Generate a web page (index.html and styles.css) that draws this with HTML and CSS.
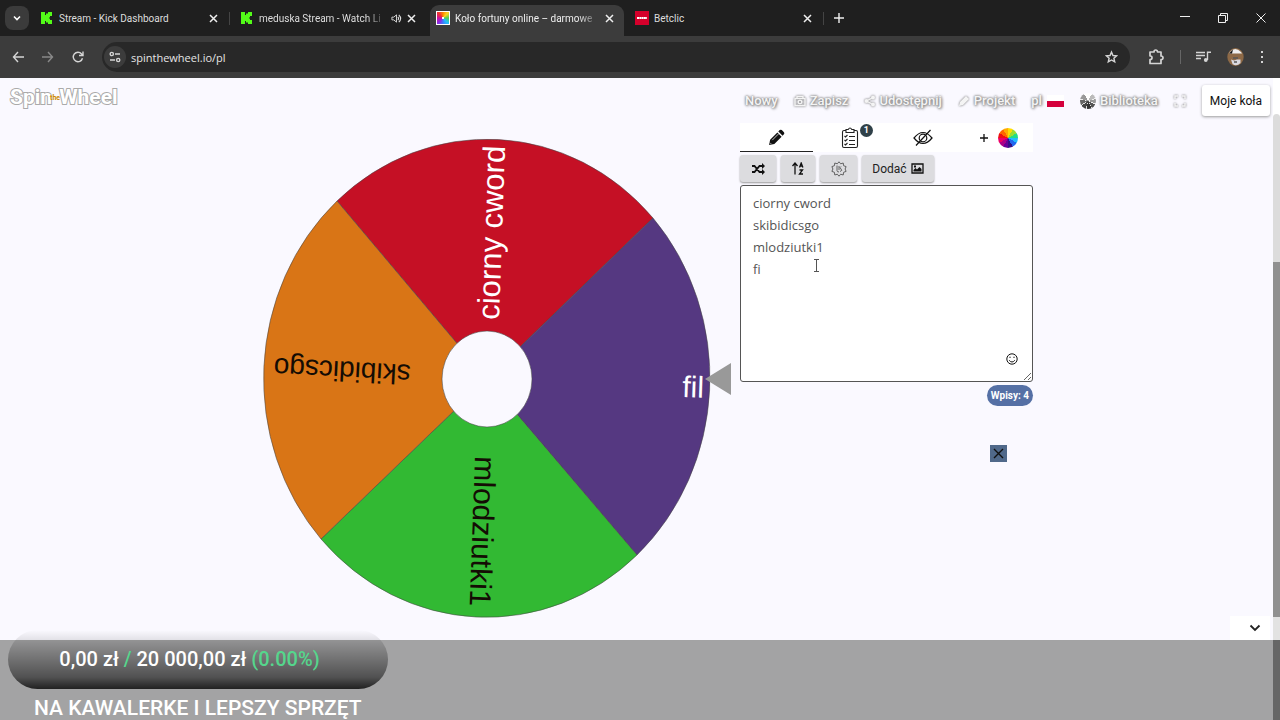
FILE: index.html
```html
<!DOCTYPE html>
<html lang="pl">
<head>
  <meta charset="UTF-8">
  <meta name="viewport" content="width=device-width, initial-scale=1.0">
  <title>Koło fortuny online – darmowe</title>
  <link rel="stylesheet" href="styles.css">
</head>
<body>
  <!-- browser tabs -->
  <div class="tabs">
    <button class="tab-search" aria-label="Szukaj kart"><svg width="8" height="8" viewBox="0 0 8 8"><path d="M1 2.500l3 3 3-3" fill="none" stroke="#fff" stroke-width="1.6"/></svg></button>
    <div class="tab">
      <svg class="favicon" viewBox="0 0 14 14"><path d="M1 1h4v3h1V2.500h2V1h4v4h-2v1.500H9v1h1V9h2v4H8v-1.500H6V10H5v3H1z" fill="#53fc18"/></svg>
      <span class="tab-title">Stream - Kick Dashboard</span>
      <button class="x" aria-label="Zamknij"><svg width="9" height="9" viewBox="0 0 9 9"><path d="M1 1l7 7M8 1l-7 7"/></svg></button>
    </div>
    <div class="tab tab-wide sep">
      <svg class="favicon" viewBox="0 0 14 14"><path d="M1 1h4v3h1V2.500h2V1h4v4h-2v1.500H9v1h1V9h2v4H8v-1.500H6V10H5v3H1z" fill="#53fc18"/></svg>
      <span class="tab-title fade">meduska Stream - Watch Li</span>
      <svg width="11" height="11" viewBox="0 0 12 12"><path d="M1 4.500v3h2l3 2.500V2L3 4.500z" fill="none" stroke="#ddd"/><path d="M7.500 4.200q1.500 1.800 0 3.600M8.500 2q4 4 0 8" fill="none" stroke="#ddd" stroke-width="1.200"/></svg>
      <button class="x" aria-label="Zamknij"><svg width="9" height="9" viewBox="0 0 9 9"><path d="M1 1l7 7M8 1l-7 7"/></svg></button>
    </div>
    <div class="tab active">
      <span class="favicon wheel-fav"></span>
      <span class="tab-title fade">Koło fortuny online – darmowe</span>
      <button class="x" aria-label="Zamknij"><svg width="9" height="9" viewBox="0 0 9 9"><path d="M1 1l7 7M8 1l-7 7"/></svg></button>
    </div>
    <div class="tab tab-last">
      <svg class="favicon" viewBox="0 0 14 14"><path d="M0 0h14v14H0z" fill="#d5002b"/><path d="M2 7h10" stroke="#fff" stroke-width="2" stroke-dasharray="2 .3"/></svg>
      <span class="tab-title">Betclic</span>
      <button class="x" aria-label="Zamknij"><svg width="9" height="9" viewBox="0 0 9 9"><path d="M1 1l7 7M8 1l-7 7"/></svg></button>
    </div>
    <button class="new-tab sep" aria-label="Nowa karta"><svg width="10" height="10" viewBox="0 0 10 10"><path d="M5 0v10M0 5h10" stroke-width="1.400"/></svg></button>
    <div class="win">
      <button aria-label="Minimalizuj"><svg width="10" height="10" viewBox="0 0 10 10"><path d="M0 3.500h10"/></svg></button>
      <button aria-label="Przywróć"><svg width="10" height="10" viewBox="0 0 10 10"><path d="M.5 2.500h7v7h-7zM2.500 2.500v-2h7v7h-2"/></svg></button>
      <button aria-label="Zamknij okno"><svg width="10" height="10" viewBox="0 0 10 10"><path d="M.5 .5l9 9M9.500 .5l-9 9"/></svg></button>
    </div>
  </div>

  <!-- address bar -->
  <div class="toolbar">
    <button aria-label="Wstecz"><svg width="12" height="12" viewBox="0 0 12 12"><path d="M6 1L1.500 6 6 11M1.500 6H12"/></svg></button>
    <button class="off" aria-label="Dalej"><svg width="12" height="12" viewBox="0 0 12 12"><path d="M6 1l4.500 5L6 11M10.500 6H0"/></svg></button>
    <button aria-label="Odśwież"><svg width="12" height="12" viewBox="0 0 12 12"><path d="M10.500 7.200A4.700 4.700 0 1 1 9.600 3L11 4.500M11 .5v4H7"/></svg></button>
    <div class="address">
      <span class="site-info"><svg width="12" height="12" viewBox="0 0 12 12"><circle cx="2.800" cy="3" r="1.600"/><path d="M6 3h5M1 9h5"/><circle cx="9.200" cy="9" r="1.600"/></svg></span>
      <input type="text" value="spinthewheel.io/pl" aria-label="Adres">
      <button aria-label="Zakładka"><svg width="13" height="14" viewBox="0 0 24 24"><path d="M12 3l2.700 6.200 6.800.6-5.100 4.500 1.500 6.700-5.900-3.500L6.100 21l1.500-6.700L2.500 9.800l6.800-.6z" stroke-width="2.600"/></svg></button>
    </div>
    <div class="tools">
      <button aria-label="Rozszerzenia"><svg width="16" height="16" viewBox="0 0 16 16"><path d="M2 3h4q0-2 1.700-2T9.500 3H13v4q2 0 2 1.800T13 10.500v4H2v-4q2 0 2-1.800T2 7z" stroke-linejoin="round" stroke-width="1.700"/></svg></button>
      <button class="bar-left" aria-label="Multimedia"><svg width="15" height="12" viewBox="0 0 15 12"><path d="M0 1.500h9M0 4.500h9M0 7.500h5M11.500 9V1.200H15"/><circle cx="9.800" cy="9" r="1.900" class="dot"/></svg></button>
      <button aria-label="Profil"><svg width="17" height="18" viewBox="0 0 17 18"><ellipse cx="8.500" cy="9" rx="8.200" ry="9" fill="#8d6946" stroke="none"/><path d="M3 4q5-6 11 0l1 1.500H2z" fill="#eee" stroke="none"/><path d="M2 5.500l4-4-1 4z" fill="#111" stroke="none"/><path d="M4 11.500l3 1 3-1 3.500 0v3.500q-4 4-8 1z" fill="#d8d8e0" stroke="none"/><path d="M6 10h5M7 14h3" stroke="#555"/></svg></button>
      <button aria-label="Menu"><svg width="4" height="14" viewBox="0 0 4 14"><path class="dot" d="M1 1h2v2H1zM1 6h2v2H1zM1 11h2v2H1z"/></svg></button>
    </div>
  </div>

  <div class="view">
    <div class="page">
      <div class="left">
        <a class="logo" href="#">Spin<small>the</small>Wheel</a>
        <svg class="wheel" viewBox="0 0 470 482">
          <g stroke="#444" stroke-opacity=".7" stroke-width=".8">
            <path d="M225 241L75 63A224 240 0 0 1 391 80Z" fill="#c51025"/>
            <path d="M225 241L391 80A224 240 0 0 1 375 417Z" fill="#553881"/>
            <path d="M225 241L375 417A224 240 0 0 1 59 401Z" fill="#32b933"/>
            <path d="M225 241L59 401A224 240 0 0 1 75 63Z" fill="#d97516"/>
            <ellipse cx="225" cy="241" rx="45" ry="48" fill="#faf9ff"/>
          </g>
          <text class="light" font-size="31" transform="translate(237 182) rotate(-88)">ciorny cword</text>
          <text class="light" font-size="30" transform="translate(420 259) rotate(2)">fil</text>
          <text font-size="30" transform="translate(213 318) rotate(92)">mlodziutki1</text>
          <text font-size="28" transform="translate(149 227) rotate(183)">skibidicsgo</text>
          <path d="M443 241l26-16v32z" fill="#999"/>
        </svg>
      </div>

      <div class="right">
        <nav class="menu">
          <a href="#">Nowy</a>
          <a href="#"><svg width="12" height="12" viewBox="0 0 12 12"><path d="M1 3.500h10v7H1zM3 3.500v-2h6v2"/><circle cx="6" cy="7" r="1.800"/></svg>Zapisz</a>
          <a href="#"><svg width="11" height="12" viewBox="0 0 11 12"><path d="M9 2.500L2.500 6 9 9.500"/><circle class="fill" cx="9" cy="2.500" r="2"/><circle class="fill" cx="2.500" cy="6" r="2"/><circle class="fill" cx="9" cy="9.500" r="2"/></svg>Udostępnij</a>
          <a href="#"><svg width="12" height="12" viewBox="0 0 12 12"><path class="fill" d="M1 11l1-4 6-6 3 3-6 6z"/></svg>Projekt</a>
          <a href="#">pl<span class="flag"></span></a>
          <a href="#"><span class="mini-wheel"></span>Biblioteka</a>
          <a href="#" aria-label="Pełny ekran"><svg width="12" height="12" viewBox="0 0 12 12"><path d="M1 4V1h3M8 1h3v3M11 8v3H8M4 11H1V8"/></svg></a>
          <button class="mine">Moje koła</button>
        </nav>

        <div class="panel">
          <div class="modes">
            <button class="on" aria-label="Edycja"><svg width="17" height="17" viewBox="0 0 16 16"><path fill="#111" d="M1 15l1-5 6.800-6.800 4 4L6 14zM9.700 2.300L11 1q1-.8 2 0l2 2q.8 1 0 2l-1.300 1.300z"/><path d="M4 10.500l6-6M2 13l1 1" stroke="#fff" stroke-width=".7"/></svg></button>
            <button aria-label="Wyniki"><svg width="18" height="22" viewBox="0 0 18 22" fill="none" stroke="#222" stroke-width="1.100"><path d="M5 3.500H3q-1.500 0-1.500 1.500v14q0 1.500 1.500 1.500h12q1.500 0 1.500-1.500V5q0-1.500-1.500-1.500h-2M5 5.500v-3h2.200q1.800-3 3.600 0H13v3zM8 9.500h6M8 13.500h6M8 17.500h6M3.500 9l1 1 2-2M3.500 13l1 1 2-2M3.500 17l1 1 2-2"/></svg><span class="count">1</span></button>
            <button aria-label="Ukryj"><svg width="20" height="18" viewBox="0 0 20 18" fill="none" stroke="#111" stroke-width="1.200"><path d="M1 9q9-11 18 0-9 11-18 0zM17.500 1L3 16.500"/><circle cx="10" cy="9" r="3.800"/></svg></button>
            <button class="new-wheel" aria-label="Dodaj koło"><svg width="10" height="10" viewBox="0 0 10 10"><path d="M5 1v8M1 5h8" stroke="#111" stroke-width="1.300"/></svg><span class="color-wheel"></span></button>
          </div>
          <div class="actions">
            <button aria-label="Mieszaj"><svg width="13" height="12" viewBox="0 0 13 12" fill="none" stroke="#111" stroke-width="1.800"><path d="M0 3h2.500l5 6H11M0 9h2.500l5-6H11"/><path fill="#111" stroke="none" d="M10 0l3 3-3 3zM10 6l3 3-3 3z"/></svg></button>
            <button class="sort" aria-label="Sortuj"><svg width="12" height="13" viewBox="0 0 12 13" fill="none" stroke="#111" stroke-width="1.300"><path d="M3 12.500v-11M.5 4L3 1l2.500 3M7.500 5.500l1.700-4.500 1.700 4.500M8 4h2.500M7.500 8h3L7.500 12H11"/></svg></button>
            <button class="gear" aria-label="Ustawienia"><svg width="16" height="16" viewBox="0 0 16 16" fill="none" stroke="#555" stroke-width=".9"><path d="M8 .8l1.700 2 2.500-.8.400 2.700 2.500.900-1 2.400 1 2.400-2.500.9-.4 2.700-2.500-.8-1.700 2-1.700-2-2.500.8-.4-2.700-2.500-.9 1-2.400-1-2.400 2.500-.9L3.800 2l2.500.8z"/><path d="M6 4.500v5q0 1.500 2 1.500M8 5v4M10 5.500q-2 1 0 2.500t-1 2.500"/></svg></button>
            <button class="add">Dodać <svg width="13" height="11" viewBox="0 0 13 11"><path d="M1 1h11v9H1z" fill="none" stroke="#111" stroke-width="1.300"/><path d="M2.500 8.500V7L4.500 5l1.500 1.500L8.500 4l2 2v2.500zM3 2.500h2v2H3z" fill="#111"/></svg></button>
          </div>
          <div class="entries">
            <textarea aria-label="Wpisy" spellcheck="false">ciorny cword
skibidicsgo
mlodziutki1
fi</textarea>
            <button class="emoji" aria-label="Emoji"><svg width="12" height="12" viewBox="0 0 12 12" fill="none" stroke="#111"><circle cx="6" cy="6" r="5.200"/><path d="M3.200 7.300q2.800 3.400 5.600 0M4 3.700v1.300M8 3.700v1.300"/></svg></button>
            <svg class="cursor" width="7" height="13" viewBox="0 0 7 13"><path d="M1 .5h5M1 12.500h5M3.500 1v11" stroke="#555"/></svg>
          </div>
          <span class="total">Wpisy: 4</span>
          <button class="close-ad" aria-label="Zamknij"><svg width="11" height="11" viewBox="0 0 11 11"><path d="M1 1l9 9M10 1l-9 9" stroke="#111" stroke-width="1.400"/></svg></button>
        </div>
        <button class="collapse" aria-label="Zwiń"><svg width="12" height="8" viewBox="0 0 12 8"><path d="M1.500 1.500L6 6l4.500-4.500" fill="none" stroke="#222" stroke-width="1.800"/></svg></button>
      </div>
    </div>
    <div class="scroll"><span class="thumb"></span><span class="track"></span><span class="end"></span></div>
  </div>

  <!-- donation goal -->
  <div class="goal">
    <div class="pill">0,00 zł <i>/</i> 20 000,00 zł <em>(0.00%)</em></div>
    <div class="goal-name">NA KAWALERKE I LEPSZY SPRZĘT</div>
  </div>
</body>
</html>
```
FILE: styles.css
```css
* {
  box-sizing: border-box;
}
body {
  margin: 0;
  height: 100vh;
  display: flex;
  flex-direction: column;
  overflow: hidden;
  font-family: Roboto, sans-serif;
  font-size: 13px;
  background: #faf9ff;
}
button {
  font: inherit;
  border: none;
  background: none;
  padding: 0;
  display: flex;
  align-items: center;
  justify-content: center;
}
a {
  text-decoration: none;
}
svg {
  flex: none;
}

/* browser */
.tabs {
  display: flex;
  height: 36px;
  flex: none;
  background: #1f1f1f;
  color: #ddd;
  font-size: 10px;
}
.tabs button svg {
  fill: none;
  stroke: #eee;
}
.tabs .x svg {
  stroke-width: 1.5;
}
.tab-search {
  width: 24px;
  height: 24px;
  margin: 6px 0 0 5px;
  border-radius: 8px;
  background: #3b3b3b;
}
.tab {
  display: flex;
  align-items: center;
  gap: 5px;
  width: 200px;
  padding: 0 11px;
}
.tab-wide {
  width: 198px;
}
.tab.active {
  background: #3c3c3c;
  width: 194px;
  margin-top: 5px;
  margin-left: 3px;
  padding: 0 10px 5px 6px;
  border-radius: 9px 9px 0 0;
  color: #eee;
}
.tab-last {
  width: 199px;
}
.favicon {
  width: 14px;
  height: 14px;
  flex: none;
}
.wheel-fav {
  border: 1px solid #fff;
  background: radial-gradient(#fff 0 12%, transparent 15%), conic-gradient(#ff8a00, #ffd21f 12%, #50d050 25%, #20c0ff 38%, #3d7bff 50%, #8a2be2 62%, #d0109a 75%, #e33 88%, #ff8a00);
}
.tab-title {
  flex: 1;
  white-space: nowrap;
}
.fade {
  mask-image: linear-gradient(90deg, #000 85%, transparent);
}
.sep {
  background: linear-gradient(#444, #444) no-repeat 0 12px / 1px 13px;
}
.new-tab {
  width: 31px;
}
.win {
  display: flex;
  gap: 28px;
  margin-left: auto;
  padding-right: 14px;
}
.toolbar {
  display: flex;
  align-items: center;
  height: 42px;
  flex: none;
  padding: 0 16px 0 12px;
  gap: 18px;
  background: #3c3c3c;
}
.toolbar svg {
  fill: none;
  stroke: #d5d5d5;
  stroke-width: 1.4;
}
.toolbar .dot {
  fill: #d5d5d5;
  stroke: none;
}
.off {
  opacity: .5;
}
.address {
  flex: 1;
  display: flex;
  align-items: center;
  height: 30px;
  padding: 0 12px 0 2px;
  border-radius: 15px;
  background: #282828;
}
.site-info {
  width: 22px;
  height: 22px;
  border-radius: 50%;
  background: #3c3c3c;
  display: flex;
  align-items: center;
  justify-content: center;
}
.address input {
  flex: 1;
  border: none;
  background: none;
  color: #e5e5e5;
  font-family: "Open Sans", sans-serif;
  font-size: 11px;
  padding: 0 5px;
}
.tools {
  display: flex;
  align-items: center;
  gap: 16px;
}
.bar-left {
  border-left: 1px solid #666;
  padding-left: 15px;
  height: 14px;
}

/* page */
.view {
  flex: 1;
  min-height: 0;
  display: flex;
}
.page {
  flex: 1;
  display: grid;
  grid-template-columns: 1fr 540px;
}
.left {
  display: flex;
  flex-direction: column;
  padding: 6px 0 0 10px;
}
.logo {
  font-size: 21px;
  line-height: 26px;
  font-weight: bold;
  color: #fff;
  -webkit-text-stroke: 2px #aaa;
  paint-order: stroke;
}
.logo small {
  font-size: 7px;
  color: #c80;
  -webkit-text-stroke: 0;
  vertical-align: middle;
  margin: 0 -1px 0 -2px;
}
.wheel {
  width: 470px;
  height: 482px;
  align-self: flex-end;
  margin-top: 27px;
  margin-right: 1px;
}
.wheel text {
  font-family: "Liberation Sans", Arial, sans-serif;
  fill: #140c04;
}
.wheel .light {
  fill: #fff;
}
.right {
  display: flex;
  flex-direction: column;
  padding: 7px 3px 0 7px;
}
.menu {
  display: flex;
  align-items: center;
  justify-content: space-between;
  height: 31px;
  padding-left: 5px;
}
.menu a {
  display: flex;
  align-items: center;
  gap: 4px;
  font-weight: 500;
  color: #f4f4f4;
  text-shadow: 0 0 2px #888, 0 0 3px #888, 1px 1px 3px #888;
}
.menu svg {
  fill: none;
  stroke: #f4f4f4;
  stroke-width: 1.4;
  filter: drop-shadow(0 0 1px #666);
}
.menu .fill {
  fill: #f4f4f4;
  stroke: none;
}
.flag {
  width: 17px;
  height: 12px;
  margin-left: 1px;
  background: linear-gradient(#fff 50%, #d4003c 50%);
}
.mini-wheel {
  width: 16px;
  height: 16px;
  border-radius: 50%;
  background: conic-gradient(#fff 0 8%, #bbb 8% 19%, #eee 19% 21%, #999 21% 30%, #eee 30% 32%, #555 32% 41%, #ddd 41% 43%, #333 43% 53%, #ddd 53% 55%, #444 55% 65%, #ddd 65% 67%, #666 67% 78%, #eee 78% 80%, #999 80% 92%, #fff 92%);
}
.menu .mine {
  width: 68px;
  height: 31px;
  border-radius: 3px;
  background: #fff;
  font-size: 12px;
  color: #111;
  box-shadow: 0 1px 3px #999;
}
.panel {
  display: flex;
  flex-direction: column;
  width: 293px;
  margin-top: 7px;
}
.modes {
  display: grid;
  grid-template-columns: repeat(4, 1fr);
  height: 29px;
  background: #fff;
}
.modes button {
  gap: 9px;
}
.modes .new-wheel {
  padding-left: 4px;
}
.modes .on {
  border-bottom: 1px solid #222;
}
.count {
  align-self: flex-start;
  width: 13px;
  height: 13px;
  margin: 1px -14px 0 -8px;
  border-radius: 50%;
  background: #2f4048;
  color: #fff;
  font-size: 9px;
  line-height: 13px;
  font-weight: bold;
}
.color-wheel {
  width: 20px;
  height: 20px;
  border-radius: 50%;
  background: conic-gradient(#fd0 0 8%, #9d3 8% 17%, #2d8 17% 25%, #2bf 25% 33%, #26e 33% 42%, #318 42% 50%, #609 50% 58%, #a08 58% 67%, #e06 67% 75%, #e11 75% 83%, #f60 83% 92%, #fa0 92%);
}
.actions {
  display: flex;
  gap: 5px;
  margin: 3px 0;
}
.actions button {
  width: 36px;
  height: 27px;
  border-radius: 3px;
  background: #dcdcdf;
  box-shadow: 0 1px 2px #999;
}
.actions .sort {
  width: 34px;
}
.actions .gear {
  width: 37px;
}
.actions .add {
  width: 72px;
  gap: 4px;
  font-size: 12px;
  color: #222;
}
.entries {
  position: relative;
  display: flex;
}
.entries textarea {
  flex: 1;
  height: 197px;
  margin: 0;
  padding: 6px 12px;
  border: 1px solid #555;
  border-radius: 3px;
  background: #fff;
  color: #555;
  font-family: "Open Sans", sans-serif;
  font-size: 13px;
  line-height: 22px;
}
.emoji {
  position: absolute;
  right: 15px;
  bottom: 17px;
}
.cursor {
  position: absolute;
  left: 73px;
  top: 74px;
}
.total {
  align-self: flex-end;
  margin-top: 3px;
  padding: 0 4px;
  line-height: 21px;
  border-radius: 11px;
  background: #5570a5;
  color: #fff;
  font-size: 10px;
  font-weight: bold;
}
.close-ad {
  align-self: flex-end;
  width: 17px;
  height: 17px;
  margin: 39px 26px 0 0;
  background: #50698a;
}
.collapse {
  align-self: flex-end;
  width: 40px;
  height: 24px;
  padding-left: 9px;
  margin-top: auto;
  background: #fff;
}
.scroll {
  display: flex;
  flex-direction: column;
  width: 7px;
  padding-top: 36px;
  background: #fff;
}
.thumb {
  height: 148px;
  border-radius: 4px 4px 0 0;
  background: #dcdcdc;
}
.track {
  flex: 1;
  background: #909090;
}
.end {
  height: 23px;
  background: #e2e2e2;
}

.goal {
  height: 80px;
  flex: none;
  padding-left: 8px;
  background: linear-gradient(#666, #666) no-repeat right / 7px 100%, #a3a3a4;
  color: #fff;
  font-weight: 500;
}
.pill {
  width: 380px;
  height: 59px;
  margin-top: -10px;
  padding-right: 17px;
  border-radius: 30px;
  background: linear-gradient(transparent, rgba(0, 0, 0, .1) 18%, rgba(0, 0, 0, .5) 80%, rgba(0, 0, 0, .8));
  text-align: center;
  font-size: 20px;
  line-height: 59px;
}
.pill i,
.pill em {
  color: #55d68c;
  font-style: normal;
}
.goal-name {
  padding-left: 26px;
  font-size: 21px;
  line-height: 38px;
  white-space: nowrap;
}
```
